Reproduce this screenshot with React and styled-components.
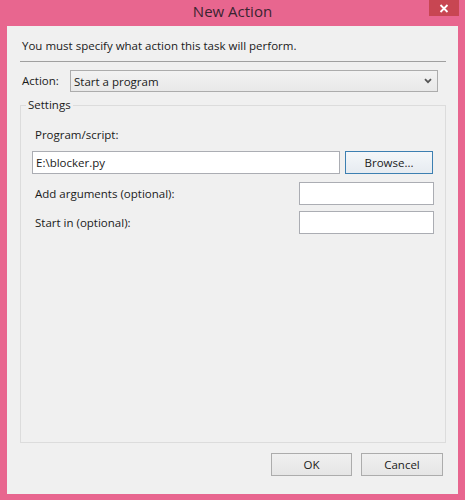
import React, { useState } from 'react';
import styled, { createGlobalStyle } from 'styled-components';

const GlobalStyle = createGlobalStyle`
  html, body {
    margin: 0;
    padding: 0;
    background: #e8668f;
  }
  body {
    font-family: "Open Sans", "Noto Sans", "Liberation Sans", sans-serif;
    font-size: 11.5px;
    color: #1a1a1a;
  }
`;

const Window = styled.div`
  width: 465px;
  height: 500px;
  display: flex;
  flex-direction: column;
  background: #e8668f;
`;

const TitleBar = styled.div`
  height: 26px;
  display: grid;
  grid-template-columns: 1fr auto 1fr;
  align-items: start;
`;

const Title = styled.div`
  grid-column: 2;
  font-size: 15px;
  line-height: 22px;
  color: #3a2430;
`;

const CloseButton = styled.button`
  grid-column: 3;
  justify-self: end;
  margin-right: 6px;
  width: 30px;
  height: 16px;
  border: none;
  padding: 0;
  background: #c84652;
  display: flex;
  align-items: center;
  justify-content: center;
`;

const Client = styled.div`
  flex: 1;
  margin: 0 7px 6px 7px;
  background: #f0f0f0;
  display: flex;
  flex-direction: column;
  padding: 11px 12px 18px 13px;
`;

const Intro = styled.div`
  padding-left: 2px;
  line-height: 18px;
`;

const Separator = styled.hr`
  margin: 6px 0 0 0;
  border: none;
  border-top: 1px solid #a0a0a0;
  height: 0;
`;

const ActionRow = styled.div`
  display: flex;
  align-items: center;
  margin-top: 8px;
  padding-left: 2px;
`;

const Label = styled.label`
  width: ${p => p.$width || 'auto'};
  flex-shrink: 0;
  line-height: 16px;
`;

const Select = styled.div`
  flex: 1;
  height: 20px;
  margin-right: 8px;
  border: 1px solid #acacac;
  background: linear-gradient(#f2f2f2, #e8e8e8);
  display: flex;
  align-items: center;
  justify-content: space-between;
  padding: 0 5px 0 3px;
`;

const Group = styled.fieldset`
  margin: 5px 0 0 0;
  padding: 14px 11px 0 11px;
  border: 1px solid #dcdcdc;
  flex: 1;
  display: flex;
  flex-direction: column;
  min-height: 0;
`;

const Legend = styled.legend`
  padding: 0 2px;
  margin-left: -6px;
  line-height: 16px;
`;

const FieldTitle = styled.div`
  padding-left: 3px;
  line-height: 16px;
`;

const Row = styled.div`
  display: flex;
  align-items: center;
  justify-content: space-between;
  margin-top: ${p => p.$gap || 0}px;
`;

const TextInput = styled.input`
  box-sizing: border-box;
  height: ${p => p.$h || 23}px;
  width: ${p => p.$w}px;
  border: 1px solid #abadb3;
  background: #fff;
  font: inherit;
  color: #1a1a1a;
  padding: 0 3px;
  outline: none;
`;

const Button = styled.button`
  box-sizing: border-box;
  width: ${p => p.$w}px;
  height: 23px;
  font: inherit;
  color: #1a1a1a;
  border: 1px solid ${p => (p.$focus ? '#3c7fb1' : '#acacac')};
  background: ${p => (p.$focus ? 'linear-gradient(#f4f7fa, #e6ebf0)' : 'linear-gradient(#f0f0f0, #e5e5e5)')};
  padding: 0;
`;

const Footer = styled.div`
  display: flex;
  justify-content: flex-end;
  gap: 9px;
  margin-top: 10px;
  padding-right: 3px;
`;

export default function App() {
  const [program, setProgram] = useState('E:\\blocker.py');
  const [args, setArgs] = useState('');
  const [startIn, setStartIn] = useState('');

  return (
    <Window>
      <GlobalStyle />
      <TitleBar>
        <Title>New Action</Title>
        <CloseButton aria-label="Close">
          <svg width="10" height="9" viewBox="0 0 10 9">
            <path d="M1.5 1 L8.5 8 M8.5 1 L1.5 8" stroke="#fff" strokeWidth="1.8" />
          </svg>
        </CloseButton>
      </TitleBar>
      <Client>
        <Intro>You must specify what action this task will perform.</Intro>
        <Separator />
        <ActionRow>
          <Label $width="48px">Action:</Label>
          <Select>
            <span>Start a program</span>
            <svg width="8" height="6" viewBox="0 0 8 6">
              <path d="M1 1.2 L4 4.2 L7 1.2" stroke="#555" strokeWidth="1.8" fill="none" />
            </svg>
          </Select>
        </ActionRow>
        <Group>
          <Legend>Settings</Legend>
          <FieldTitle>Program/script:</FieldTitle>
          <Row $gap={8}>
            <TextInput $w={308} $h={23} value={program} onChange={e => setProgram(e.target.value)} />
            <Button $w={88} $focus style={{ marginRight: 1 }}>Browse...</Button>
          </Row>
          <Row $gap={8}>
            <FieldTitle>Add arguments (optional):</FieldTitle>
            <TextInput $w={135} $h={23} value={args} onChange={e => setArgs(e.target.value)} />
          </Row>
          <Row $gap={6}>
            <FieldTitle>Start in (optional):</FieldTitle>
            <TextInput $w={135} $h={23} value={startIn} onChange={e => setStartIn(e.target.value)} />
          </Row>
        </Group>
        <Footer>
          <Button $w={81}>OK</Button>
          <Button $w={82}>Cancel</Button>
        </Footer>
      </Client>
    </Window>
  );
}
